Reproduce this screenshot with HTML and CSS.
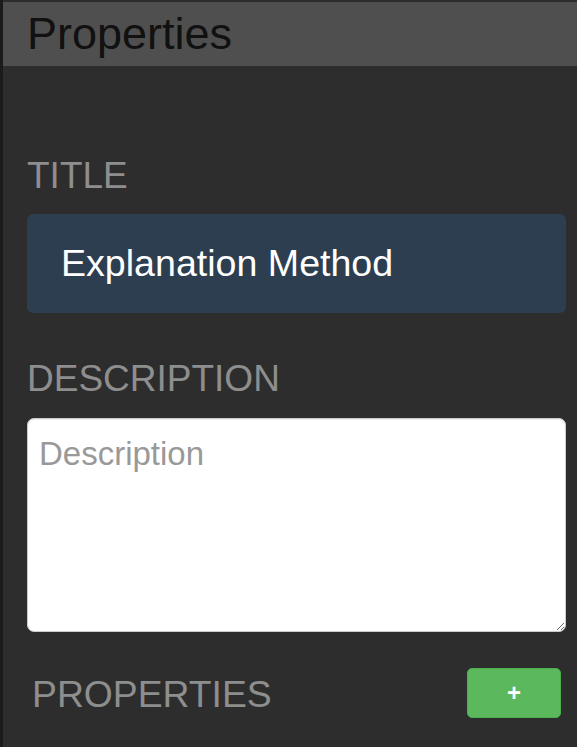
FILE: index.html
```html
<!DOCTYPE html>
<html lang="en">
<head>
<meta charset="utf-8">
<title>Properties</title>
<link rel="stylesheet" href="styles.css">
</head>
<body>
<div class="panel">
  <div class="panel-header">Properties</div>
  <div class="panel-body">
    <div class="field-label">TITLE</div>
    <div class="title-box">Explanation Method</div>
    <div class="field-label desc-label">DESCRIPTION</div>
    <textarea class="desc-input" placeholder="Description"></textarea>
    <div class="props-row">
      <span class="field-label props-label">PROPERTIES</span>
      <button class="add-btn" type="button">+</button>
    </div>
  </div>
</div>
</body>
</html>
```

FILE: styles.css
```css
html, body {
  margin: 0;
  padding: 0;
  background: #2d2d2d;
}

.panel {
  min-height: 747px;
  box-sizing: border-box;
  border-left: 3px solid #1b1b1b;
  padding-top: 2px;
  font-family: "Liberation Sans", Arial, sans-serif;
}

.panel-header {
  height: 64px;
  line-height: 64px;
  background: #4f4f4f;
  color: #111;
  font-size: 45px;
  padding-left: 24px;
}

.panel-body {
  padding: 88px 11px 0 24px;
}

.field-label {
  font-size: 37px;
  line-height: 43px;
  color: #8e8e8e;
}

.title-box {
  margin-top: 17px;
  background: #2c3e50;
  border-radius: 6px;
  padding: 28px 34px;
  font-size: 37.6px;
  line-height: 43px;
  color: #fff;
}

.desc-label {
  margin-top: 44px;
}

.desc-input {
  display: block;
  margin-top: 18px;
  width: 100%;
  height: 214px;
  box-sizing: border-box;
  border: 1px solid #ccc;
  border-radius: 7px;
  box-shadow: inset 0 1px 1px rgba(0, 0, 0, 0.075);
  padding: 10px 11px;
  font-family: "Liberation Sans", Arial, sans-serif;
  font-size: 33px;
  line-height: 1.5;
  color: #333;
  background: #fff;
}

.desc-input::placeholder {
  color: #999;
}

.props-row {
  margin-top: 36px;
  display: flex;
  justify-content: space-between;
  align-items: center;
  padding: 0 5px 0 5px;
}

.props-label {
  padding-top: 2px;
  font-size: 37.3px;
}

.add-btn {
  width: 94px;
  height: 50px;
  padding: 0;
  background: #5cb85c;
  border: 1px solid #4cae4c;
  border-radius: 5px;
  color: #fff;
  font-family: "Liberation Sans", Arial, sans-serif;
  font-weight: bold;
  font-size: 24px;
  line-height: 1;
}
```
